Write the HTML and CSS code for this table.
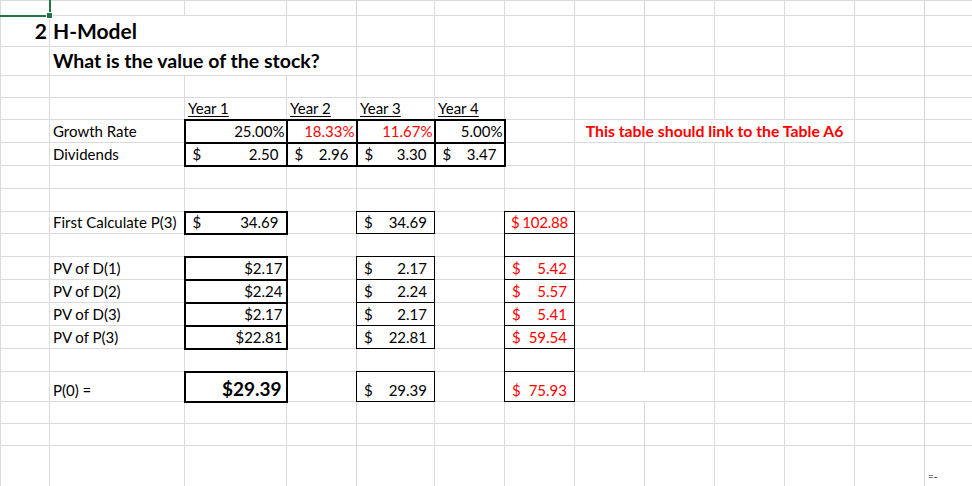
FILE: index.html
```html
<!DOCTYPE html>
<html>
<head>
<meta charset="utf-8">
<title>H-Model</title>
<link rel="stylesheet" href="styles.css">
</head>
<body>
<table class="sheet">
<colgroup>
<col class="c-a"><col class="c-b"><col class="c-c"><col class="c-n"><col class="c-e"><col class="c-n"><col class="c-n"><col class="c-n"><col class="c-n"><col class="c-n"><col class="c-n"><col class="c-n"><col class="c-m">
</colgroup>
<tr class="h15"><td class="sel"><span class="handle"></span></td><td></td><td></td><td></td><td></td><td></td><td></td><td></td><td></td><td></td><td></td><td></td><td></td></tr>
<tr class="h31"><td class="title num">2</td><td class="title" colspan="2">H-Model</td><td></td><td></td><td></td><td></td><td></td><td></td><td></td><td></td><td></td><td></td></tr>
<tr class="h29"><td></td><td class="subtitle" colspan="3">What is the value of the stock?</td><td></td><td></td><td></td><td></td><td></td><td></td><td></td><td></td><td></td></tr>
<tr class="h22"><td></td><td></td><td></td><td></td><td></td><td></td><td></td><td></td><td></td><td></td><td></td><td></td><td></td></tr>
<tr class="h22"><td></td><td></td><td class="yr"><u>Year 1</u></td><td class="yr"><u>Year 2</u></td><td class="yr"><u>Year 3</u></td><td class="yr"><u>Year 4</u></td><td></td><td></td><td></td><td></td><td></td><td></td><td></td></tr>
<tr class="h23"><td></td><td class="lbl">Growth Rate</td><td class="tk pct">25.00%</td><td class="tk pct red">18.33%</td><td class="tk pct red">11.67%</td><td class="tk pct">5.00%</td><td></td><td class="note" colspan="4">This table should link to the Table A6</td><td></td><td></td></tr>
<tr class="h23"><td></td><td class="lbl">Dividends</td><td class="tk acc"><span class="cur">$</span>2.50</td><td class="tk acc"><span class="cur">$</span>2.96</td><td class="tk acc"><span class="cur">$</span>3.30</td><td class="tk acc"><span class="cur">$</span>3.47</td><td></td><td></td><td></td><td></td><td></td><td></td><td></td></tr>
<tr class="h23"><td></td><td></td><td></td><td></td><td></td><td></td><td></td><td></td><td></td><td></td><td></td><td></td><td></td></tr>
<tr class="h23"><td></td><td></td><td></td><td></td><td></td><td></td><td></td><td></td><td></td><td></td><td></td><td></td><td></td></tr>
<tr class="h22"><td></td><td class="lbl">First Calculate P(3)</td><td class="tk acc"><span class="cur">$</span>34.69</td><td></td><td class="tn acc"><span class="cur">$</span>34.69</td><td></td><td class="tn acc red wide"><span class="cur">$</span>102.88</td><td></td><td></td><td></td><td></td><td></td><td></td></tr>
<tr class="h23"><td></td><td></td><td></td><td></td><td></td><td></td><td class="tn"></td><td></td><td></td><td></td><td></td><td></td><td></td></tr>
<tr class="h23"><td></td><td class="lbl">PV of D(1)</td><td class="tk cash">$2.17</td><td></td><td class="tn acc"><span class="cur">$</span>2.17</td><td></td><td class="tn acc red"><span class="cur">$</span>5.42</td><td></td><td></td><td></td><td></td><td></td><td></td></tr>
<tr class="h23"><td></td><td class="lbl">PV of D(2)</td><td class="tk cash">$2.24</td><td></td><td class="tn acc"><span class="cur">$</span>2.24</td><td></td><td class="tn acc red"><span class="cur">$</span>5.57</td><td></td><td></td><td></td><td></td><td></td><td></td></tr>
<tr class="h23"><td></td><td class="lbl">PV of D(3)</td><td class="tk cash">$2.17</td><td></td><td class="tn acc"><span class="cur">$</span>2.17</td><td></td><td class="tn acc red"><span class="cur">$</span>5.41</td><td></td><td></td><td></td><td></td><td></td><td></td></tr>
<tr class="h23"><td></td><td class="lbl">PV of P(3)</td><td class="tk cash">$22.81</td><td></td><td class="tn acc"><span class="cur">$</span>22.81</td><td></td><td class="tn acc red"><span class="cur">$</span>59.54</td><td></td><td></td><td></td><td></td><td></td><td></td></tr>
<tr class="h23"><td></td><td></td><td></td><td></td><td></td><td></td><td class="tn"></td><td></td><td></td><td></td><td></td><td></td><td></td></tr>
<tr class="h30"><td></td><td class="lbl">P(0) =</td><td class="tk cash big">$29.39</td><td></td><td class="tn acc"><span class="cur">$</span>29.39</td><td></td><td class="tn acc red"><span class="cur">$</span>75.93</td><td colspan="2"></td><td></td><td></td><td></td><td></td></tr>
<tr class="h22"><td></td><td></td><td></td><td></td><td></td><td></td><td></td><td></td><td></td><td></td><td></td><td></td><td></td></tr>
<tr class="h22"><td></td><td></td><td></td><td></td><td></td><td></td><td></td><td></td><td></td><td></td><td></td><td></td><td></td></tr>
<tr class="h41"><td></td><td></td><td></td><td></td><td></td><td></td><td></td><td></td><td></td><td></td><td></td><td></td><td class="tiny">=-</td></tr>
</table>
</body>
</html>
```

FILE: styles.css
```css
html, body {
  margin: 0;
  padding: 0;
  background: #ffffff;
  overflow: hidden;
}
body {
  font-family: Lato, "Liberation Sans", sans-serif;
  font-size: 15px;
  color: #000000;
}
.sheet {
  border-collapse: collapse;
  table-layout: fixed;
  width: 972px;
}
.c-a { width: 49px; }
.c-b { width: 135px; }
.c-c { width: 102px; }
.c-e { width: 78px; }
.c-n { width: 70px; }
.c-m { width: 48px; }

.sheet td {
  border: 1px solid #dadada;
  padding: 0 3px 2px 3px;
  vertical-align: bottom;
  white-space: nowrap;
  line-height: 18px;
  overflow: visible;
}
.h15 { height: 15px; }
.h22 { height: 22px; }
.h23 { height: 23px; }
.h29 { height: 29px; }
.h30 { height: 30px; }
.h31 { height: 31px; }
.h41 { height: 41px; }

.sheet td.sel {
  position: relative;
  border-right: 2px solid #217346;
  border-bottom: 2px solid #217346;
}
.handle {
  position: absolute;
  right: -4px;
  bottom: -4px;
  width: 5px;
  height: 5px;
  background: #217346;
  border: 1px solid #ffffff;
}

.sheet td.title {
  font-size: 21px;
  font-weight: 700;
  line-height: 25px;
  padding-bottom: 3px;
}
.sheet td.num { text-align: right; padding-right: 2px; }
.sheet td.subtitle {
  font-size: 19.5px;
  font-weight: 700;
  line-height: 23px;
  padding-bottom: 3px;
}
.sheet td.lbl { padding-left: 3px; }
.sheet td.yr u { text-underline-offset: 2px; }

.sheet td.tk { border: 2px solid #000000; }
.sheet td.tn { border: 1px double #000000; }

.sheet td.pct { text-align: right; padding-right: 1px; }
.sheet td.acc { text-align: right; padding: 0 7px 2px 7px; }
.sheet td.acc.wide { padding: 0 6px 2px 6px; letter-spacing: -0.2px; }
.sheet td.cash { text-align: right; padding-right: 3px; }
.cur { float: left; }
.red { color: #ff0000; }

.sheet td.big {
  font-size: 19px;
  font-weight: 700;
  line-height: 22px;
  padding-bottom: 1px;
  padding-right: 4px;
}
.sheet td.note {
  color: #ff0000;
  font-size: 15.8px;
  font-weight: 700;
  text-align: center;
}
.sheet td.tiny {
  font-size: 10px;
  line-height: 10px;
  padding-bottom: 5px;
}
```
